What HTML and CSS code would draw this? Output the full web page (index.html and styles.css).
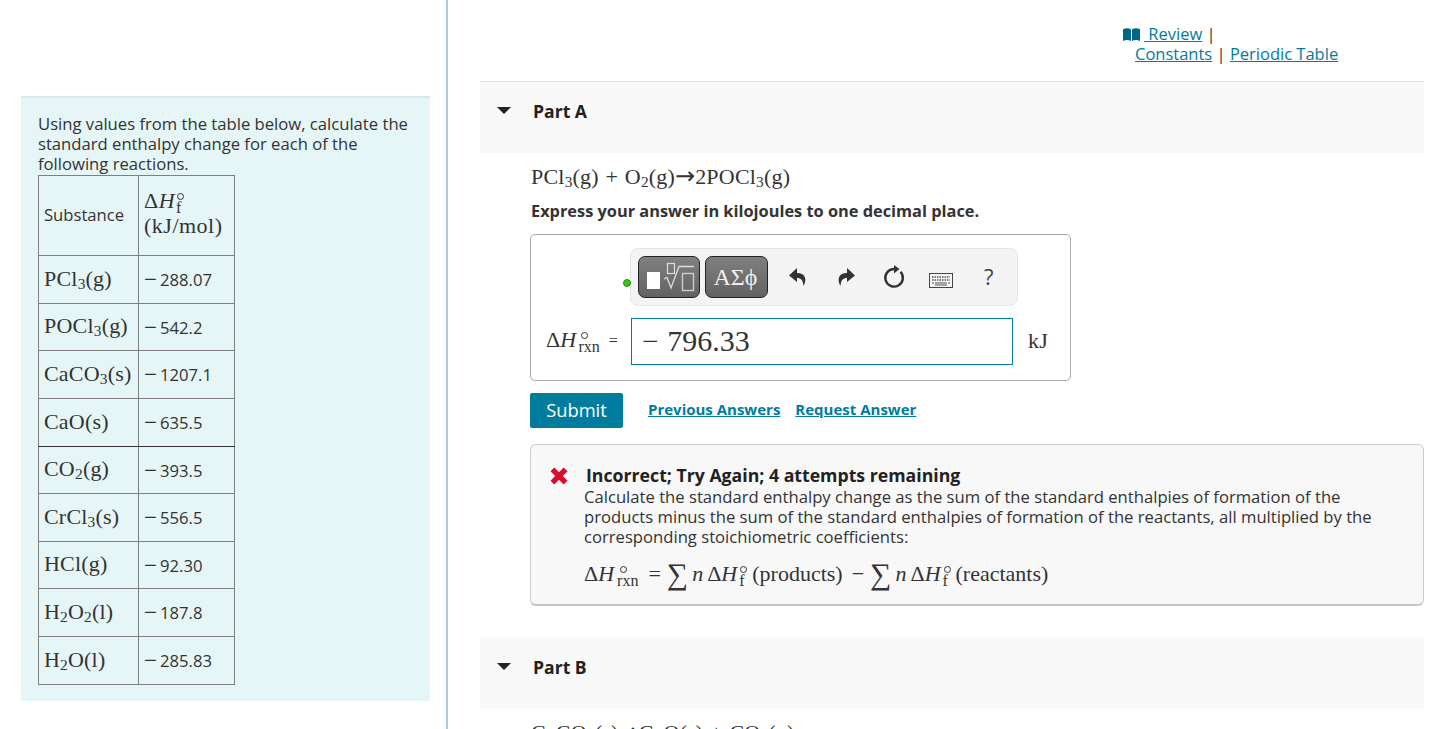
FILE: index.html
```html
<!DOCTYPE html>
<html lang="en">
<head>
<meta charset="utf-8">
<title>Standard enthalpy change</title>
<link rel="stylesheet" href="styles.css">
</head>
<body>
<div class="page">
  <aside class="left">
    <div class="panel">
      <p class="intro">Using values from the table below, calculate the standard enthalpy change for each of the following reactions.</p>
      <table class="tbl">
        <tr class="rhead">
          <td class="c1">Substance</td>
          <td class="c2 m head"><span class="line">Δ<i>H</i><span class="ss"><span class="deg"></span><span class="lbl">f</span></span></span><span class="line">(kJ/mol)</span></td>
        </tr>
        <tr class="r48"><td class="m">PCl<sub>3</sub>(g)</td><td class="v"><span class="minus">−</span>288.07</td></tr>
        <tr class="r47"><td class="m">POCl<sub>3</sub>(g)</td><td class="v"><span class="minus">−</span>542.2</td></tr>
        <tr class="r48"><td class="m">CaCO<sub>3</sub>(s)</td><td class="v"><span class="minus">−</span>1207.1</td></tr>
        <tr class="r48 dark"><td class="m">CaO(s)</td><td class="v"><span class="minus">−</span>635.5</td></tr>
        <tr class="r47"><td class="m">CO<sub>2</sub>(g)</td><td class="v"><span class="minus">−</span>393.5</td></tr>
        <tr class="r48"><td class="m">CrCl<sub>3</sub>(s)</td><td class="v"><span class="minus">−</span>556.5</td></tr>
        <tr class="r47"><td class="m">HCl(g)</td><td class="v"><span class="minus">−</span>92.30</td></tr>
        <tr class="r48"><td class="m">H<sub>2</sub>O<sub>2</sub>(l)</td><td class="v"><span class="minus">−</span>187.8</td></tr>
        <tr class="r48"><td class="m">H<sub>2</sub>O(l)</td><td class="v"><span class="minus">−</span>285.83</td></tr>
      </table>
    </div>
  </aside>
  <main class="right">
    <nav class="links">
      <svg class="book" viewBox="0 0 17 13" width="17" height="13"><path d="M0 1.200C2.500 0 5.500 0 8 1.200V13C5.500 11.800 2.500 11.800 0 13Z"/><path d="M9 1.200C11.500 0 14.500 0 17 1.200V13C14.500 11.800 11.500 11.800 9 13Z"/></svg><a href="#">&nbsp;Review</a> <span class="sep">|</span><br>
      <a href="#">Constants</a> <span class="sep">|</span> <a href="#">Periodic Table</a>
    </nav>

    <section class="part parta">
      <svg class="tri" viewBox="0 0 14 7" width="14" height="7"><path d="M0 0H14L7 7Z"/></svg>
      <h2>Part A</h2>
    </section>
    <div class="body">
      <div class="m eq">PCl<sub>3</sub>(g) <span class="pl">+</span> O<sub>2</sub>(g)<span class="arrow">→</span>2POCl<sub>3</sub>(g)</div>
      <p class="express">Express your answer in kilojoules to one decimal place.</p>

      <div class="answer">
        <div class="toolbar">
          <span class="dot"></span>
          <button class="tb tb1" type="button">
            <svg viewBox="0 0 60 40" width="60" height="40">
              <rect x="8" y="15" width="13" height="17" fill="#fff"/>
              <rect x="28.500" y="6.500" width="7" height="10" fill="none" stroke="#ddd" stroke-width="1.200"/>
              <path d="M25 22L28 20.500L32 31L40 9.500H55" fill="none" stroke="#ddd" stroke-width="1.300"/>
              <rect x="43.500" y="16.500" width="11" height="17" fill="none" stroke="#ccc" stroke-width="1.400"/>
            </svg>
          </button>
          <button class="tb tb2" type="button">ΑΣϕ</button>
          <svg class="ic ic-undo" viewBox="0 0 24 24" width="24" height="24"><path d="M11 3L3 10.500L11 17V13C15 13 17 15 17.500 21C21 15 20 8 11 8Z"/></svg>
          <svg class="ic ic-redo" viewBox="0 0 24 24" width="24" height="24"><path d="M13 3L21 10.500L13 17V13C9 13 7 15 6.500 21C3 15 4 8 13 8Z"/></svg>
          <svg class="ic ic-reset" viewBox="0 0 24 24" width="24" height="24"><path d="M12 4A8.800 8.800 0 1 0 18.500 6.800" fill="none" stroke="#333" stroke-width="2.400"/><path d="M12 0L17.500 4L12 8.500Z"/></svg>
          <svg class="ic ic-kb" viewBox="0 0 24 15" width="24" height="15">
            <rect x="0.500" y="0.500" width="23" height="14" fill="none" stroke="#444"/>
            <path d="M3 4H21M3 7H21" stroke="#555" stroke-width="1.500" stroke-dasharray="1.500 1"/>
            <path d="M3 10H5M6 10H18M19 10H21M6 12H18" stroke="#555" stroke-width="1.200"/>
          </svg>
          <span class="help">?</span>
        </div>
        <div class="row">
          <label class="lab m">Δ<i>H</i><span class="ss ss-wide"><span class="deg"></span><span class="lbl">rxn</span></span><span class="eqs">=</span></label>
          <div class="input m"><span class="big-minus">−</span>796.33</div>
          <span class="unit m">kJ</span>
        </div>
      </div>

      <div class="actions">
        <button class="submit" type="button">Submit</button>
        <a class="act first" href="#">Previous Answers</a>
        <a class="act" href="#">Request Answer</a>
      </div>

      <div class="feedback">
        <svg class="x" viewBox="0 0 18 18" width="18" height="18"><path d="M4.300 0.500L9 5.200L13.700 0.500L17.500 4.300L12.800 9L17.500 13.700L13.700 17.500L9 12.800L4.300 17.500L0.500 13.700L5.200 9L0.500 4.300Z"/></svg>
        <div class="fb-text">
          <div class="fb-title">Incorrect; Try Again; 4 attempts remaining</div>
          <p class="fb-body">Calculate the standard enthalpy change as the sum of the standard enthalpies of formation of the products minus the sum of the standard enthalpies of formation of the reactants, all multiplied by the corresponding stoichiometric coefficients:</p>
          <div class="m fb-eq">Δ<i>H</i><span class="ss ss-wide"><span class="deg"></span><span class="lbl">rxn</span></span><span class="op">=</span><span class="sum">∑</span><i class="n">n</i>Δ<i>H</i><span class="ss"><span class="deg"></span><span class="lbl">f</span></span>(products)<span class="op">−</span><span class="sum">∑</span><i class="n">n</i>Δ<i>H</i><span class="ss"><span class="deg"></span><span class="lbl">f</span></span>(reactants)</div>
        </div>
      </div>
    </div>

    <section class="part partb">
      <svg class="tri" viewBox="0 0 14 7" width="14" height="7"><path d="M0 0H14L7 7Z"/></svg>
      <h2>Part B</h2>
    </section>
    <div class="body">
      <div class="m eq eqb">CaCO<sub>3</sub>(s)<span class="arrow">→</span>CaO(s) <span class="pl">+</span> CO<sub>2</sub>(g)</div>
    </div>
  </main>
</div>
</body>
</html>
```
FILE: styles.css
```css
* { box-sizing: border-box; }
html, body { margin: 0; height: 729px; overflow: hidden; background: #fff; }
body { font-family: "Open Sans", "Noto Sans", sans-serif; font-size: 16.65px; line-height: 20px; color: #333; }
p { margin: 0; }
.page { display: flex; height: 729px; overflow: hidden; }

.left { width: 448px; flex: none; border-right: 2px solid #b9c7dc; padding: 96px 16px 0 21px; }
.panel { width: 409px; background: #e6f6f6; border-top: 2px solid #dde6ea; padding: 16px 17px 16px; }
.intro { margin-bottom: 1px; }

.m { font-family: "Liberation Serif", serif; letter-spacing: 0.2px; }
.m sub { font-size: 0.7em; line-height: 0; vertical-align: -0.18em; }
.arrow { font-family: "DejaVu Sans", sans-serif; font-size: 24px; line-height: 0; letter-spacing: 0; }
.pl { margin: 0 1px; }

.tbl { border-collapse: collapse; width: 196px; table-layout: fixed; }
.tbl td { border: 1px solid #808080; padding: 0 0 0 5px; box-sizing: border-box; vertical-align: middle; }
.tbl td.m { font-size: 22px; padding-bottom: 2px; }
.tbl td.c1 { padding-bottom: 2px; }
.tbl td.v { padding-top: 1px; }
.tbl .c1 { width: 100px; }
.tbl .c2 { width: 96px; }
.rhead td { height: 80px; }
.r48 td { height: 48px; }
.r47 td { height: 47px; }
.dark td { border-bottom-color: #333; }
.tbl td.head { line-height: 24px; padding-bottom: 4px; letter-spacing: 0.5px; }
.line { display: block; white-space: nowrap; }
.minus { font-family: "Liberation Serif", serif; font-size: 23px; line-height: 0; margin-right: 3px; vertical-align: -1px; }

.ss { display: inline-block; vertical-align: -5px; font-size: 16px; line-height: 12px; font-style: normal; margin-left: 1px; letter-spacing: 0; }
.deg { display: block; width: 7px; height: 7px; border: 1px solid #333; border-radius: 50%; margin: 0 0 2px 1px; }
.lbl { display: block; }
.ss-wide { margin-left: 2px; }
.ss-wide .deg { margin-left: 3px; }

.right { flex: 1; min-width: 0; padding: 24px 23px 0 32px; }
.links { width: 225px; margin-left: 643px; padding-left: 12px; text-indent: -12px; height: 40px; margin-bottom: 17px; white-space: nowrap; font-size: 16.5px; }
.links a { color: #007c9e; }
.sep { color: #333; }
.book { fill: #006785; vertical-align: -1px; margin-right: 4px; }

.part { background: #f9f9f9; display: flex; align-items: flex-start; padding-left: 17px; }
.parta { height: 72px; border-top: 1px solid #e2e2e2; padding-top: 19px; }
.partb { height: 71px; margin-top: 32px; padding-top: 19px; }
.part h2 { margin: 0; font-size: 17.6px; font-weight: 700; line-height: 20px; color: #222; }
.tri { fill: #222; margin: 6px 22px 0 0; flex: none; }

.body { padding-left: 50px; }
.eq { font-size: 22px; line-height: 24px; padding-top: 12px; margin-left: 1px; height: 37px; white-space: nowrap; }
.eqb { padding-top: 12px; }
.express { font-size: 16.35px; font-weight: 700; margin: 11px 0 12px 1px; line-height: 21px; }

.answer { width: 541px; height: 147px; border: 1px solid #aaa; border-radius: 5px; padding: 13px 0 0; }
.toolbar { width: 388px; height: 58px; margin-left: 99px; background: #f4f4f4; border: 1px solid #e6e6e6; border-radius: 8px; display: flex; align-items: flex-start; padding: 7px 0 0 7px; position: relative; }
.dot { position: absolute; left: -8px; top: 30px; width: 8px; height: 8px; border-radius: 50%; background: #2fd000; border: 1.500px solid #3c7a3c; }
.tb { height: 42px; border: 1px solid #222; border-radius: 7px; background: linear-gradient(#808080, #626262); color: #fff; padding: 0; display: flex; align-items: center; justify-content: center; font-family: "Liberation Serif", serif; }
.tb1 { width: 62px; }
.tb2 { width: 63px; margin-left: 5px; font-size: 24px; color: #eee; padding-right: 2px; }
.ic { fill: #333; flex: none; margin-top: 9px; }
.ic-undo { margin-left: 18px; }
.ic-redo { margin-left: 24px; }
.ic-reset { margin-left: 24px; }
.ic-kb { margin-left: 23px; margin-top: 17px; }
.help { margin-left: 31px; margin-top: 8px; font-size: 22px; line-height: 24px; color: #444; }

.row { display: flex; align-items: center; margin-top: 12px; height: 47px; }
.lab { width: 100px; padding-left: 15px; font-size: 22px; white-space: nowrap; }
.eqs { font-size: 16px; margin-left: 9px; vertical-align: 1px; }
.input { width: 382px; height: 47px; border: 1px solid #007c9e; font-size: 30px; line-height: 44px; padding-left: 10px; letter-spacing: 0; }
.big-minus { margin-right: 9px; font-size: 29px; }
.unit { margin: 0 0 2px 15px; font-size: 22px; }

.actions { display: flex; align-items: center; margin-top: 12px; height: 35px; }
.submit { width: 93px; height: 35px; background: #007c9e; color: #fff; border: 0; border-radius: 2px; font: 18.3px "Open Sans", sans-serif; padding: 0 0 2px; }
.act { color: #007c9e; font-weight: 700; font-size: 15px; margin-bottom: 3px; }
.first { margin-left: 25px; margin-right: 15px; }

.feedback { margin-top: 16px; height: 162px; background: #f8f8f8; border: 1px solid #ccc; border-bottom: 2px solid #c4c4c4; border-radius: 6px; display: flex; padding: 20px 0 0 19px; }
.x { fill: #dc0a2d; flex: none; margin: 2px 16px 0 0; }
.fb-text { flex: 1; }
.fb-title { font-size: 17.7px; font-weight: 700; line-height: 20px; margin: 0 0 2px 2px; color: #222; }
.fb-body { line-height: 20px; padding-right: 40px; }
.fb-eq { font-size: 22px; margin-top: 14px; line-height: 26px; white-space: nowrap; letter-spacing: 0; }
.fb-eq i { margin-right: 1px; }
.fb-eq i.n { margin-right: 4px; }
.fb-eq .ss { margin: 0 5px 0 1px; }
.fb-eq .ss-wide { margin: 0 1px 0 2px; }
.op { margin: 0 6px 0 9px; }
.sum { font-size: 30px; line-height: 20px; vertical-align: -3px; margin-right: 4px; }
```
